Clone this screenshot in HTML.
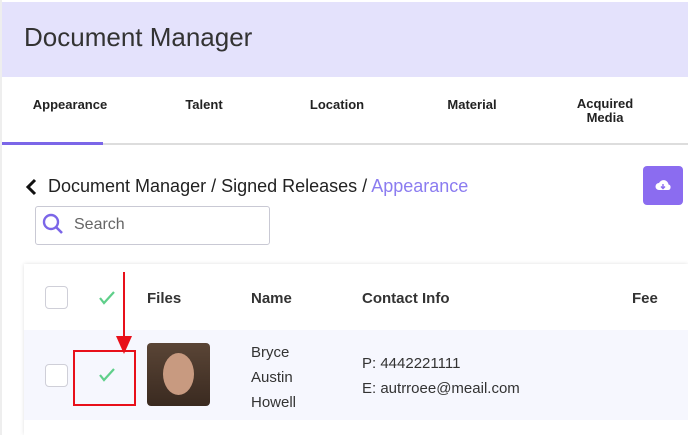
<!DOCTYPE html><html><head><style>
*{margin:0;padding:0;box-sizing:border-box}
body{width:688px;height:435px;overflow:hidden;background:#fff;font-family:"Liberation Sans",sans-serif;color:#2b2b2b;position:relative}
.a{position:absolute}
.t{font-size:13px;font-weight:bold;color:#222;text-align:center}
.cb{width:23px;height:23px;border:1.5px solid #cfcfd8;border-radius:4px;background:#fff}
</style></head><body>
<div class="a" style="left:0;top:0;width:2px;height:435px;background:#eee"></div>
<div class="a" style="left:2px;top:2px;width:686px;height:75px;background:#e4e2fc"></div>
<div class="a" style="left:24px;top:22px;font-size:26px;color:#333">Document Manager</div>
<div class="a t" style="left:20px;top:97px;width:100px">Appearance</div>
<div class="a t" style="left:160px;top:97px;width:88px">Talent</div>
<div class="a t" style="left:290px;top:97px;width:94px">Location</div>
<div class="a t" style="left:425px;top:97px;width:94px">Material</div>
<div class="a t" style="left:558px;top:97px;width:94px;line-height:14px">Acquired<br>Media</div>
<div class="a" style="left:2px;top:143px;width:686px;height:2px;background:#ddd"></div>
<div class="a" style="left:2px;top:142px;width:101px;height:3px;background:#7b66e8"></div>
<svg class="a" style="left:24px;top:178px" width="14" height="18"><path d="M11 2L4 9l7 7" fill="none" stroke="#111" stroke-width="3"/></svg>
<div class="a" style="left:48px;top:176px;font-size:18px;color:#222">Document Manager / Signed Releases / <span style="color:#8b7cf0">Appearance</span></div>
<div class="a" style="left:643px;top:166px;width:40px;height:39px;background:#8b6cf0;border-radius:4px"><svg class="a" style="left:12px;top:12px" width="16" height="14"><path d="M4 12a3.5 3.5 0 0 1 0-7 5 5 0 0 1 9.5 1.5A2.8 2.8 0 0 1 13 12z" fill="#fff"/><path d="M8 6v4M6 8.5l2 2 2-2" stroke="#8b6cf0" stroke-width="1.4" fill="none"/></svg></div>
<div class="a" style="left:35px;top:206px;width:235px;height:39px;border:1px solid #c9c9d4;border-radius:3px"></div>
<svg class="a" style="left:42px;top:213px" width="24" height="24"><circle cx="9" cy="9" r="7" fill="none" stroke="#7b66e8" stroke-width="2.4"/><path d="M14 14l6 6" stroke="#7b66e8" stroke-width="2.6"/></svg>
<div class="a" style="left:74px;top:216px;font-size:16px;color:#666">Search</div>
<div class="a" style="left:24px;top:264px;width:664px;height:171px;background:#fff;box-shadow:0 0 4px rgba(0,0,0,.12)"></div>
<div class="a" style="left:24px;top:330px;width:664px;height:90px;background:#f6f7fe"></div>
<div class="a cb" style="left:45px;top:286px"></div>
<div class="a cb" style="left:45px;top:364px"></div>
<svg class="a" style="left:97px;top:290px" width="20" height="16"><path d="M3 8l4 5 10-11" fill="none" stroke="#5fcf8a" stroke-width="2.2"/></svg>
<svg class="a" style="left:97px;top:367px" width="20" height="16"><path d="M3 8l4 5 10-11" fill="none" stroke="#5fcf8a" stroke-width="2.2"/></svg>
<div class="a" style="left:147px;top:290px;font-size:15px;font-weight:bold;color:#333">Files</div>
<div class="a" style="left:251px;top:290px;font-size:15px;font-weight:bold;color:#333">Name</div>
<div class="a" style="left:362px;top:290px;font-size:15px;font-weight:bold;color:#333">Contact Info</div>
<div class="a" style="left:632px;top:290px;font-size:15px;font-weight:bold;color:#333">Fee</div>
<div class="a" style="left:147px;top:343px;width:63px;height:63px;border-radius:4px;background:linear-gradient(#5a4536,#3a2a20);overflow:hidden"><div class="a" style="left:16px;top:10px;width:31px;height:42px;border-radius:50%;background:#c89a80"></div></div>
<div class="a" style="left:251px;top:340px;font-size:15px;line-height:25px;color:#333">Bryce<br>Austin<br>Howell</div>
<div class="a" style="left:362px;top:351px;font-size:15px;line-height:25px;color:#333">P: 4442221111<br>E: autrroee@meail.com</div>
<div class="a" style="left:73px;top:350px;width:63px;height:56px;border:2px solid #e8101a"></div>
<div class="a" style="left:123px;top:272px;width:2px;height:70px;background:#e8101a"></div>
<svg class="a" style="left:116px;top:336px" width="16" height="20"><path d="M0 0h16L8 18z" fill="#e8101a"/></svg>
</body></html>
